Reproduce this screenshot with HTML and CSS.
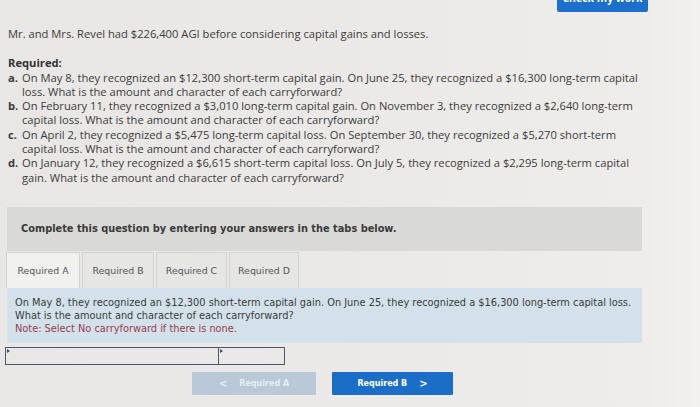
FILE: index.html
```html
<!DOCTYPE html>
<html lang="en">
<head>
<meta charset="utf-8">
<title>Capital gains carryforward</title>
<link rel="stylesheet" href="styles.css">
</head>
<body>
<div class="topbar"><button class="check">Check my work</button></div>
<section class="question">
  <p class="intro">Mr. and Mrs. Revel had $226,400 AGI before considering capital gains and losses.</p>
  <p class="req-title">Required:</p>
  <div class="item"><span class="letter">a.</span><span class="itext">On May 8, they recognized an $12,300 short-term capital gain. On June 25, they recognized a $16,300 long-term capital loss. What is the amount and character of each carryforward?</span></div>
  <div class="item"><span class="letter">b.</span><span class="itext">On February 11, they recognized a $3,010 long-term capital gain. On November 3, they recognized a $2,640 long-term capital loss. What is the amount and character of each carryforward?</span></div>
  <div class="item"><span class="letter">c.</span><span class="itext">On April 2, they recognized a $5,475 long-term capital loss. On September 30, they recognized a $5,270 short-term capital loss. What is the amount and character of each carryforward?</span></div>
  <div class="item"><span class="letter">d.</span><span class="itext">On January 12, they recognized a $6,615 short-term capital loss. On July 5, they recognized a $2,295 long-term capital gain. What is the amount and character of each carryforward?</span></div>
</section>
<div class="prompt">Complete this question by entering your answers in the tabs below.</div>
<div class="tabs">
  <div class="tab active t-a">Required A</div>
  <div class="tab t-b">Required B</div>
  <div class="tab t-c">Required C</div>
  <div class="tab t-d">Required D</div>
</div>
<div class="panel">
  <p>On May 8, they recognized an $12,300 short-term capital gain. On June 25, they recognized a $16,300 long-term capital loss. What is the amount and character of each carryforward?</p>
  <p class="note">Note: Select No carryforward if there is none.</p>
</div>
<div class="answer">
  <div class="cell wide"></div>
  <div class="cell narrow"></div>
</div>
<div class="nav">
  <button class="navbtn prev"><span class="chev">&lt;</span>Required A</button>
  <button class="navbtn next">Required B<span class="chev">&gt;</span></button>
</div>
</body>
</html>
```
FILE: styles.css
```css
html, body {
  margin: 0;
  padding: 0;
}
body {
  width: 700px;
  height: 407px;
  overflow: hidden;
  background: linear-gradient(90deg, #e8e7e5 0%, #ebeae8 60%, #eeedeb 92%, #f2f1ef 100%);
  font-family: "Open Sans", "DejaVu Sans", sans-serif;
  color: #3b3b3b;
}
.topbar {
  height: 12px;
  display: flex;
  justify-content: flex-end;
  align-items: flex-end;
  overflow: hidden;
  padding-right: 52px;
}
.check {
  flex: none;
  width: 91px;
  height: 22px;
  border: 0;
  border-radius: 2px;
  background: #1c6fcb;
  color: #fff;
  font: bold 10.5px "Open Sans", sans-serif;
  padding: 0 0 6px;
}
.question {
  padding: 0 0 0 8px;
  font-size: 11.2px;
  line-height: 14.3px;
}
.question p {
  margin: 0;
}
.intro {
  padding-top: 15px;
}
.req-title {
  font-weight: bold;
  margin-top: 15px !important;
  color: #333;
}
.item {
  display: flex;
}
.letter {
  flex: none;
  width: 14px;
  font-weight: bold;
}
.itext {
  width: 630px;
}
.prompt {
  margin: 22px 58px 0 7px;
  height: 44px;
  background: #d9d9d7;
  display: flex;
  align-items: center;
  padding-left: 14px;
  font: bold 9.8px "DejaVu Sans", Verdana, sans-serif;
  color: #3a3a3a;
}
.tabs {
  display: flex;
  gap: 2px;
  margin: 1px 0 0 6px;
}
.tab {
  height: 35px;
  display: flex;
  align-items: center;
  justify-content: center;
  border: 1px solid #d3d3d1;
  border-bottom: 0;
  background: #e6e6e4;
  font: 9.4px "DejaVu Sans", Verdana, sans-serif;
  color: #555;
}
.t-a { width: 72px; }
.t-b { width: 70px; }
.t-c { width: 69px; }
.t-d { width: 68px; }
.tab.active {
  background: #f1f1ef;
}
.panel {
  margin: 0 58px 0 7px;
  background: #d3e2ea;
  padding: 8px 5px 8px 8px;
  font: 9.8px/13px "DejaVu Sans", Verdana, sans-serif;
  color: #3a3a3a;
}
.panel p {
  margin: 0;
}
.note {
  color: #9a3a4e;
}
.answer {
  display: flex;
  margin: 4px 0 0 5px;
  width: 278px;
  height: 16px;
  border: 1.5px solid #4d566c;
}
.cell {
  position: relative;
  height: 100%;
}
.cell::before {
  content: "";
  position: absolute;
  left: 1px;
  top: 1px;
  border-left: 3px solid #3b4a6b;
  border-top: 2px solid transparent;
  border-bottom: 2px solid transparent;
}
.wide {
  width: 212px;
  border-right: 1.5px solid #4d566c;
}
.narrow {
  flex: 1;
}
.nav {
  display: flex;
  gap: 16px;
  margin: 7px 0 0 192px;
}
.navbtn {
  width: 124px;
  height: 23px;
  border: 0;
  border-radius: 1px;
  font: bold 8px "DejaVu Sans", Verdana, sans-serif;
  color: #fff;
  display: flex;
  align-items: center;
  justify-content: center;
  gap: 12px;
  padding: 0;
}
.prev {
  background: #b9c9d7;
  color: #e6edf3;
}
.next {
  background: #1b6ec8;
  width: 121px;
}
.chev {
  font-size: 10px;
  font-weight: bold;
}
```
